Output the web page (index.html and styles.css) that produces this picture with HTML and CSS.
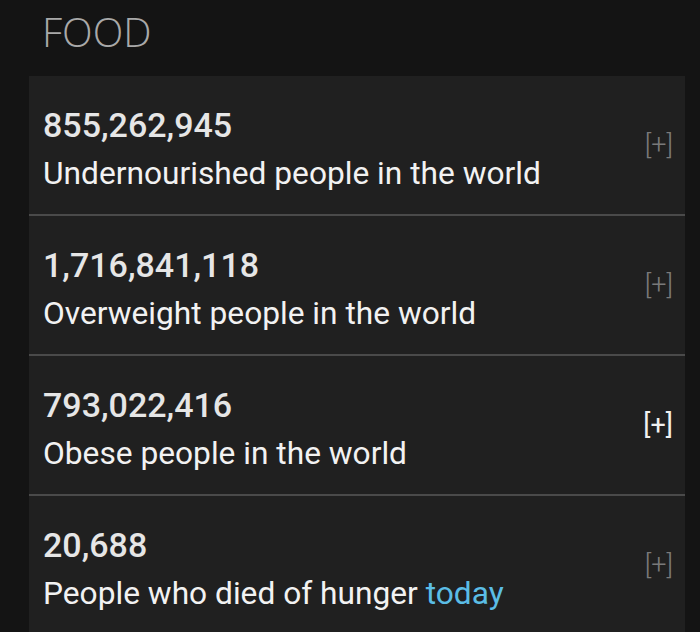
FILE: index.html
```html
<!DOCTYPE html>
<html>
<head>
<meta charset="utf-8">
<link rel="stylesheet" href="styles.css">
</head>
<body>
<div class="page">
  <h1 class="title">FOOD</h1>
  <div class="card">
    <div class="row">
      <div class="info">
        <div class="num">855,262,945</div>
        <div class="label">Undernourished people in the world</div>
      </div>
      <span class="more">[+]</span>
    </div>
    <div class="row">
      <div class="info">
        <div class="num">1,716,841,118</div>
        <div class="label">Overweight people in the world</div>
      </div>
      <span class="more">[+]</span>
    </div>
    <div class="row">
      <div class="info">
        <div class="num">793,022,416</div>
        <div class="label">Obese people in the world</div>
      </div>
      <span class="more active">[+]</span>
    </div>
    <div class="row">
      <div class="info">
        <div class="num">20,688</div>
        <div class="label">People who died of hunger <span class="hl">today</span></div>
      </div>
      <span class="more">[+]</span>
    </div>
  </div>
</div>
</body>
</html>
```
FILE: styles.css
```css
html, body {
  margin: 0;
  padding: 0;
  background: #141414;
  overflow: hidden;
}
.page {
  width: 700px;
  height: 632px;
  padding: 0 15px 0 29px;
  box-sizing: border-box;
}
.title {
  margin: 0;
  height: 76px;
  padding: 8px 0 0 13px;
  box-sizing: border-box;
  font-family: "Open Sans", sans-serif;
  font-weight: 300;
  font-size: 40px;
  line-height: 48px;
  color: #a9a9a9;
}
.card {
  background: #202020;
}
.row {
  height: 138px;
  border-bottom: 2px solid #4a4a4a;
  display: flex;
  align-items: center;
  padding: 0 12px 0 14px;
}
.row:last-child {
  border-bottom: none;
}
.info {
  flex: 1;
  padding-top: 9px;
}
.num {
  font-family: Roboto, sans-serif;
  font-weight: 500;
  font-size: 34px;
  line-height: 40px;
  color: #e6e6e6;
}
.label {
  font-family: Roboto, sans-serif;
  font-size: 31.7px;
  line-height: 40px;
  margin-top: 9px;
  color: #f2f2f2;
}
.hl {
  color: #5bbde6;
}
.more {
  font-family: Roboto, sans-serif;
  font-weight: 300;
  font-size: 27px;
  color: #7a7a7a;
}
.more.active {
  color: #f0f0f0;
  font-weight: 400;
}
```
